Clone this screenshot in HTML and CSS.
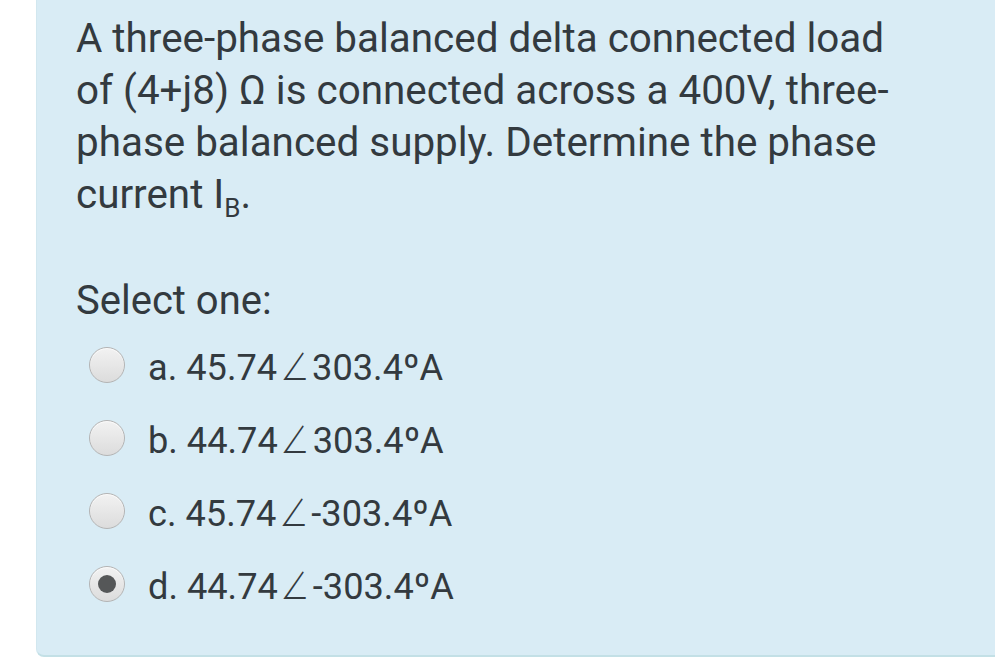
FILE: index.html
```html
<!DOCTYPE html>
<html>
<head>
<meta charset="utf-8">
<link rel="stylesheet" href="styles.css">
</head>
<body>
<div class="panel">
  <p class="qtext">A three-phase balanced delta connected load of (4+j8) Ω is connected across a 400V, three-phase balanced supply. Determine the phase current I<sub>B</sub>.</p>
  <div class="prompt">Select one:</div>
  <div class="answers">
    <label class="opt"><span class="radio"></span><span class="txt"><span class="num">a.</span> 45.74<span class="ang">∠</span>303.4ºA</span></label>
    <label class="opt"><span class="radio"></span><span class="txt"><span class="num">b.</span> 44.74<span class="ang">∠</span>303.4ºA</span></label>
    <label class="opt"><span class="radio"></span><span class="txt"><span class="num">c.</span> 45.74<span class="ang">∠</span>-303.4ºA</span></label>
    <label class="opt"><span class="radio checked"></span><span class="txt"><span class="num">d.</span> 44.74<span class="ang">∠</span>-303.4ºA</span></label>
  </div>
</div>
</body>
</html>
```

FILE: styles.css
```css
html, body {
  margin: 0;
  padding: 0;
  background: #ffffff;
}
body {
  font-family: Roboto, "Noto Sans", sans-serif;
  color: #333a3f;
  overflow: hidden;
  height: 670px;
}
.panel {
  margin-left: 36px;
  margin-top: -10px;
  width: 1000px;
  height: 667px;
  box-sizing: border-box;
  background: #d9ecf5;
  border-bottom: 2px solid #c3e0e6;
  border-left: 1px solid #d2e7ef;
  border-bottom-left-radius: 8px;
  padding: 23px 0 0 39px;
}
.qtext {
  margin: 0;
  font-size: 40.4px;
  line-height: 52px;
  width: 840px;
}
.qtext sub {
  font-size: 26px;
  vertical-align: -9px;
  line-height: 0;
}
.prompt {
  margin-top: 54px;
  font-size: 40px;
  line-height: 52px;
}
.answers {
  margin-top: 18px;
  display: flex;
  flex-direction: column;
  gap: 33px;
}
.opt {
  display: flex;
  align-items: center;
  gap: 23px;
  height: 40px;
  padding-left: 13px;
}
.radio {
  width: 36px;
  height: 36px;
  border-radius: 50%;
  border: 1px solid #b4b4b4;
  background: linear-gradient(#f2f2f2, #dcdcdc);
  box-shadow: inset 0 1px 1px rgba(255,255,255,0.8);
  box-sizing: border-box;
  display: flex;
  align-items: center;
  justify-content: center;
  flex: none;
}
.radio.checked::after {
  content: "";
  width: 18px;
  height: 18px;
  border-radius: 50%;
  background: #555758;
}
.txt {
  font-size: 36.2px;
  line-height: 40px;
  white-space: nowrap;
}
.ang {
  display: inline-block;
  width: 40px;
  margin: 0 -2.5px;
  text-align: center;
  font-family: "Noto Sans CJK JP", sans-serif;
  font-weight: 300;
  font-size: 40px;
  line-height: 40px;
  transform: scaleX(0.72);
}
```
